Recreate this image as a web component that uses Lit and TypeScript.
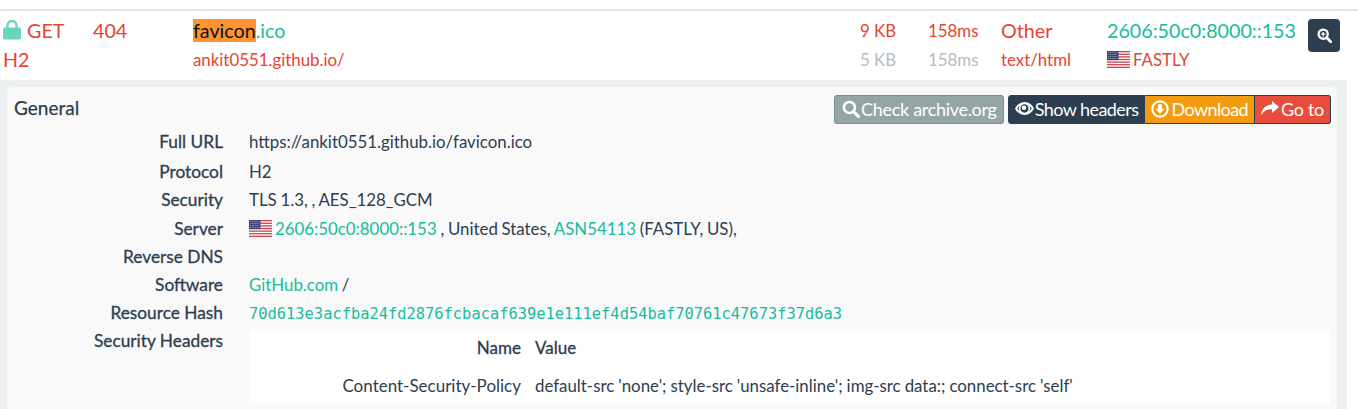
import { LitElement, html, css, svg } from "lit";
import { customElement } from "lit/decorators.js";

const flag = svg`<svg class="flag" viewBox="0 0 22 16" width="23" height="17" preserveAspectRatio="none">
<rect width="22" height="16" fill="#fff"/>
${[0, 2.46, 4.92, 7.38, 9.84, 12.3, 14.76].map((y) => svg`<rect y="${y}" width="22" height="1.23" fill="#c8454f"/>`)}
<rect width="11" height="8.6" fill="#3c3b6e"/>
${[1.3, 3.2, 5.1, 7].map((y) => svg`<path d="M1 ${y}H10" stroke="#b9bad2" stroke-width=".8" stroke-dasharray="1 .7"/>`)}
</svg>`;

const lock = html`<svg width="18" height="20" viewBox="0 0 18 20"><path d="M4.5 8V5.5a4.5 4.5 0 0 1 9 0V8" fill="none" stroke="#6ad5be" stroke-width="2.4"/><rect x="0" y="7.5" width="18" height="12" rx="1.8" fill="#6ad5be"/></svg>`;
const search = html`<svg class="ic" width="18" height="18" viewBox="0 0 17 17"><circle cx="7" cy="7" r="5.2" fill="none" stroke="#fff" stroke-width="2.4"/><path d="M10.8 10.8 15.6 15.6" stroke="#fff" stroke-width="3" stroke-linecap="round"/></svg>`;
const zoom = html`<svg width="15" height="15" viewBox="0 0 17 17"><circle cx="7" cy="7" r="5.2" fill="none" stroke="#fff" stroke-width="2.6"/><path d="M10.8 10.8 15.6 15.6" stroke="#fff" stroke-width="3.2" stroke-linecap="round"/><path d="M4.4 7H9.6M7 4.4V9.6" stroke="#fff" stroke-width="1.5"/></svg>`;
const eye = html`<svg class="ic" width="19" height="14" viewBox="0 0 19 14"><path fill-rule="evenodd" fill="#fff" d="M9.5 0C14 0 17.5 3.2 19 6.5 17.5 10 14 13 9.5 13S1.500 10 0 6.500C1.500 3.200 5 0 9.500 0ZM9.500 2.300C7.300 2.300 5.400 4.200 5.400 6.500S7.300 10.700 9.500 10.700 13.600 8.800 13.600 6.500 11.700 2.300 9.500 2.300ZM2.200 6.500C3 7.800 3.900 8.800 4.900 9.500 4.100 8.400 3.700 7.500 3.700 6.500S4.100 4.600 4.900 3.500C3.900 4.200 3 5.200 2.200 6.500ZM14.100 3.500C14.900 4.600 15.300 5.500 15.300 6.500S14.900 8.400 14.100 9.500C15.100 8.800 16 7.800 16.800 6.500 16 5.200 15.100 4.200 14.100 3.500Z"/><circle cx="9" cy="5.800" r="2.300" fill="#fff"/></svg>`;
const down = html`<svg class="ic" width="18" height="18" viewBox="0 0 17 17"><circle cx="8.500" cy="8.500" r="7.200" fill="none" stroke="#fff" stroke-width="2"/><path fill="#fff" d="M6.700 4H10.300V8.300H12.800L8.500 13 4.200 8.300H6.700Z"/></svg>`;
const share = html`<svg class="ic" width="18" height="15" viewBox="0 0 18 15"><path fill="#fff" d="M11 0 18 6 11 12V8.300C6 8.300 2.800 9.700 0 14.500 .6 8.500 4 4 11 3.600Z"/></svg>`;

@customElement("app-root")
export class AppRoot extends LitElement {
  static styles = css`
    :host { display: block; width: 1358px; height: 409px; overflow: hidden; background: #fff;
      font-family: Lato, "Liberation Sans", sans-serif; color: #2c3e50; font-size: 17px; }
    a, .teal { color: #18bc9c; }
    .top { height: 9px; }
    .summary { border-top: 2px solid #e5e5e5; height: 71px; box-sizing: border-box;
      display: grid; grid-template-columns: 90px 100px 667px 68px 73px 106px 201px 1fr;
      grid-template-rows: 28px 30px; padding: 5px 0 0 3px; align-items: center; }
    .red { color: #e64333; }
    .big { font-size: 19.7px; }
    .med { font-size: 16.85px; }
    .grey { color: #b4bcc2; }
    .method { display: flex; align-items: center; gap: 6px; }
    .mark { background: #fd9331; color: #111; }
    .wide { grid-column: span 2; }
    .zoom { grid-column: 8; grid-row: 1 / span 2; align-self: start; margin-top: 3px; width: 32px; height: 33px;
      background: #2c3e50; border-radius: 4px; display: flex; align-items: center; justify-content: center; }
    .flag { vertical-align: -2px; margin-right: 3px; }
    .detail { background: #ecf0f1; width: 1347px; height: 329px; padding: 7px 10px 0 7px; box-sizing: border-box; }
    .panel { background: #f9f9f9; border-radius: 6px 6px 0 0; height: 322px; padding: 10px 6px 0 7px; box-sizing: border-box; }
    .head { display: flex; align-items: flex-start; justify-content: space-between; height: 34px; }
    h3 { margin: -1px 0 0; font-size: 19px; font-weight: 400; color: #2c3e50; line-height: 24px;
      -webkit-text-stroke: 0.25px #2c3e50; }
    .actions { display: flex; gap: 4px; margin-top: -2px; }
    .group { display: flex; }
    .btn { display: flex; align-items: center; height: 29px; box-sizing: border-box; color: #fff; font-size: 18px;
      padding: 0 6px 2px; gap: 2px; border: 1px solid #2c3e50; white-space: nowrap; letter-spacing: -0.3px; }
    .ic { flex: none; }
    .archive { background: #95a5a6; border-color: #7b8a8b; border-radius: 3px; padding: 0 6px 2px 7px; gap: 1px; }
    .dark { background: #2c3e50; border-radius: 3px 0 0 3px; padding: 0 5px 2px 6px; gap: 1px; letter-spacing: -0.55px; }
    .orange { background: #f39c12; border-left: 0; gap: 3px; letter-spacing: -0.6px; }
    .goto { background: #e74c3c; border-left: 0; border-radius: 0 3px 3px 0; }
    .rows { display: grid; grid-template-columns: 209px 1081px; column-gap: 26px; grid-auto-rows: 28.2px; margin-top: -1px; }
    .k { text-align: right; font-size: 17.3px; -webkit-text-stroke: 0.3px #2c3e50; line-height: 28px; }
    .v { line-height: 28px; white-space: nowrap; font-size: 16.85px; word-spacing: -0.6px; }
    .first { margin-top: -2px; }
    code { font-family: "DejaVu Sans Mono", monospace; font-size: 15.4px; color: #18bc9c; word-spacing: 0; }
    .tbl { background: #fff; height: 75px; display: grid; grid-template-columns: 272px 1fr; column-gap: 14px;
      grid-template-rows: 37px 37px; margin-top: 2px; white-space: nowrap; }
    .tbl .th { font-weight: 400; -webkit-text-stroke: 0.3px #2c3e50; align-self: center; }
    .tbl .td { align-self: center; margin-top: 2px; }
    .tbl .val { font-size: 16.85px; word-spacing: -0.3px; }
    .r { text-align: right; }
  `;

  render() {
    const rows: [string, unknown][] = [
      ["Full URL", "https://ankit0551.github.io/favicon.ico"],
      ["Protocol", "H2"],
      ["Security", "TLS 1.3, , AES_128_GCM"],
      ["Server", html`${flag}<a>2606:50c0:8000::153</a> , United States, <a>ASN54113</a> (FASTLY, US),`],
      ["Reverse DNS", ""],
      ["Software", html`<a>GitHub.com</a> /`],
      ["Resource Hash", html`<code>70d613e3acfba24fd2876fcbacaf639e1e111ef4d54baf70761c47673f37d6a3</code>`],
    ];
    return html`
      <div class="top"></div>
      <div class="summary">
        <div class="method red big">${lock}<span>GET</span></div>
        <div class="red big">404</div>
        <div class="big teal"><span class="mark">favicon</span>.ico</div>
        <div class="red med">9 KB</div>
        <div class="red med">158ms</div>
        <div class="red big">Other</div>
        <div class="big teal">2606:50c0:8000::153</div>
        <div class="zoom">${zoom}</div>
        <div class="red big wide">H2</div>
        <div class="red med">ankit0551.github.io/</div>
        <div class="grey med">5 KB</div>
        <div class="grey med">158ms</div>
        <div class="red med">text/html</div>
        <div class="red med">${flag}FASTLY</div>
      </div>
      <div class="detail">
        <div class="panel">
          <div class="head">
            <h3>General</h3>
            <div class="actions">
              <div class="btn archive">${search}Check archive.org</div>
              <div class="group">
                <div class="btn dark">${eye}Show headers</div>
                <div class="btn orange">${down}Download</div>
                <div class="btn goto">${share}Go to</div>
              </div>
            </div>
          </div>
          <div class="rows">
            ${rows.map(([k, v], i) => html`<div class="k ${i === 0 ? "first" : ""}">${k}</div><div class="v ${i === 0 ? "first" : ""}">${v}</div>`)}
            <div class="k">Security Headers</div>
            <div class="tbl">
              <div class="th r">Name</div><div class="th">Value</div>
              <div class="td r">Content-Security-Policy</div>
              <div class="td val">default-src 'none'; style-src 'unsafe-inline'; img-src data:; connect-src 'self'</div>
            </div>
          </div>
        </div>
      </div>
    `;
  }
}
